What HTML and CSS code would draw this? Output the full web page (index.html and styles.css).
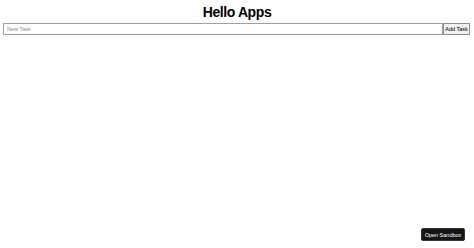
FILE: index.html
```html
<!DOCTYPE html>
<html lang="en">
<head>
    <meta charset="UTF-8">
    <meta name="viewport" content="width=device-width, initial-scale=1.0">
    <title>Hello Apps</title>
    <link rel="stylesheet" href="styles.css">
</head>
<body>

<header>
    <h1>Hello Apps</h1>
</header>

<main>
    <form class="task-form" onsubmit="return false">
        <input type="text" class="task-input" placeholder="New Task">
        <button type="submit" class="add-button">Add Task</button>
    </form>
    <ul class="task-list"></ul>
</main>

<a href="#" class="sandbox-button">Open Sandbox</a>

</body>
</html>
```

FILE: styles.css
```css
body {
    font-family: "Liberation Sans", Arial, sans-serif;
    margin: 0;
    padding: 0;
    background-color: #ffffff;
    color: #000;
}
header {
    text-align: center;
    padding-top: 6px;
}
h1 {
    font-size: 14px;
    font-weight: bold;
    margin: 0;
    line-height: 13px;
    letter-spacing: -0.4px;
}
main {
    padding: 4px 4px 0 3px;
}
.task-form {
    display: flex;
    margin: 0;
}
.task-input {
    flex: 1;
    height: 12px;
    box-sizing: border-box;
    border: 1px solid #a0a0a0;
    padding: 0 3px;
    font-family: inherit;
    font-size: 5.5px;
    margin: 0;
    outline: none;
}
.task-input::placeholder {
    color: #8a8a8a;
}
.add-button {
    height: 12px;
    width: 27px;
    box-sizing: border-box;
    border: 1px solid #8f8f8f;
    background-color: #efefef;
    padding: 0;
    font-family: inherit;
    font-size: 5.5px;
    color: #000;
    margin: 0;
}
.task-list {
    list-style: none;
    margin: 0;
    padding: 0;
}
.sandbox-button {
    position: fixed;
    right: 9px;
    bottom: 7px;
    width: 44px;
    height: 13px;
    display: flex;
    align-items: center;
    justify-content: center;
    background-color: #151515;
    border: 1px solid #333;
    box-sizing: border-box;
    border-radius: 2px;
    color: #fff;
    font-size: 5.5px;
    text-decoration: none;
}
```
